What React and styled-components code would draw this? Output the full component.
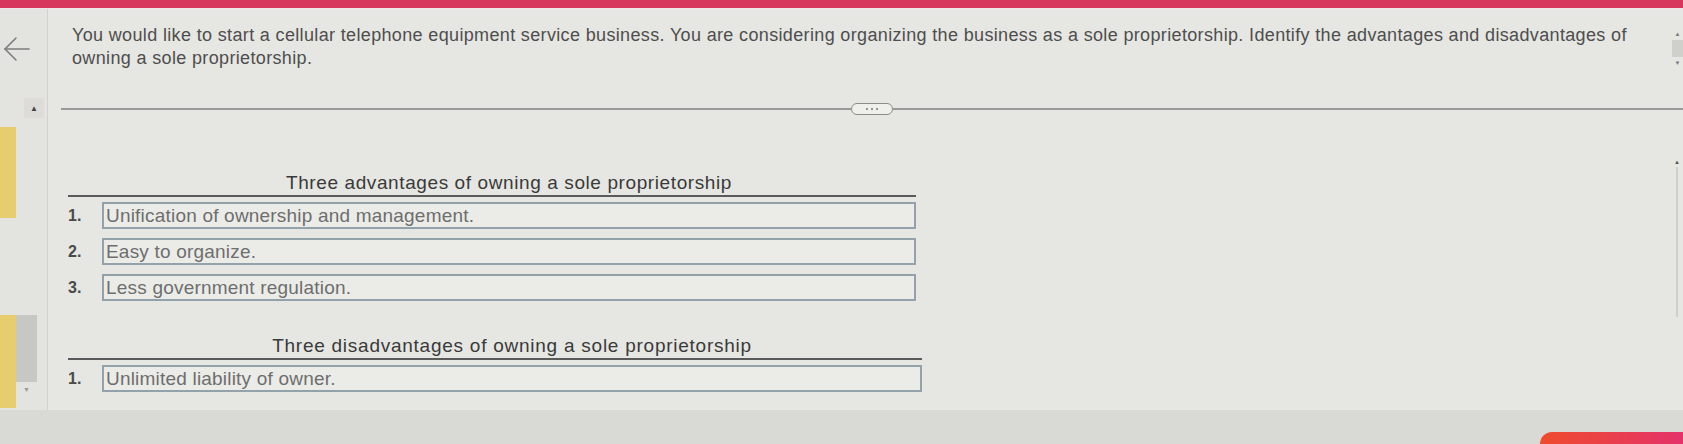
import React from "react";
import styled, { createGlobalStyle } from "styled-components";

const Global = createGlobalStyle`
  html, body { margin: 0; padding: 0; }
  body {
    background: #d9d9d5;
    font-family: "Liberation Sans", Arial, sans-serif;
    width: 1683px;
    height: 444px;
    overflow: hidden;
  }
`;

const Page = styled.div`
  width: 1683px;
  height: 444px;
  display: flex;
  flex-direction: column;
  background: #d9d9d5;
`;

const TopBar = styled.div`
  height: 8px;
  background: #d7375c;
  border-bottom: 1px solid #eee6e8;
`;

const Body = styled.div`
  height: 401px;
  display: flex;
  background: #e6e6e2;
`;

const Sidebar = styled.nav`
  width: 47px;
  border-right: 1px solid #d2d2ce;
  display: flex;
  flex-direction: column;
  background: #e3e3df;
`;

const BackButton = styled.button`
  all: unset;
  height: 58px;
  padding-left: 3px;
  display: flex;
  align-items: center;
  color: #7e7e7e;
  margin-top: 11px;
  align-self: flex-start;
`;

const NavUp = styled.div`
  margin: 20px 0 0 24px;
  width: 20px;
  height: 20px;
  background: #dddcd8;
  display: flex;
  align-items: center;
  justify-content: center;
  color: #444;
  font-size: 8px;
`;

const NavItem = styled.div`
  width: ${(p) => p.$w || 16}px;
  flex-shrink: 0;
  height: ${(p) => p.$h}px;
  margin-top: ${(p) => p.$mt || 0}px;
  background: ${(p) => p.$bg};
  display: flex;
`;

const NavScroll = styled.div`
  width: 21px;
  display: flex;
  flex-direction: column;
  align-items: center;
  gap: 4px;
`;

const NavThumb = styled.div`
  width: 21px;
  height: 67px;
  background: #c7c7c3;
`;

const NavDown = styled.div`
  font-size: 7px;
  color: #9a9a9a;
`;

const Main = styled.main`
  flex: 1;
  display: flex;
  flex-direction: column;
  min-width: 0;
`;

const QuestionRow = styled.div`
  display: flex;
  height: 92px;
`;

const Question = styled.p`
  margin: 0;
  padding: 15px 0 0 24px;
  width: 1580px;
  flex-shrink: 0;
  font-size: 18px;
  line-height: 23px;
  letter-spacing: 0.35px;
  color: #4e4e4e;
`;

const MiniScroll = styled.div`
  margin: 22px 0 0 auto;
  width: 11px;
  display: flex;
  flex-direction: column;
  align-items: center;
  gap: 3px;
  font-size: 6px;
  color: #777;
`;

const MiniThumb = styled.div`
  width: 11px;
  height: 17px;
  background: #cfcfcb;
`;

const DividerRow = styled.div`
  margin-left: 13px;
  height: 16px;
  display: flex;
  align-items: center;
`;

const Rule = styled.div`
  flex: 1;
  height: 2px;
  background: #9a9a98;
`;

const Pill = styled.button`
  all: unset;
  width: 40px;
  height: 10px;
  border: 1.5px solid #8c8c8a;
  border-radius: 7px;
  background: #efefec;
  display: flex;
  align-items: center;
  justify-content: center;
  gap: 3px;
`;

const Dot = styled.span`
  width: 2px;
  height: 2px;
  border-radius: 50%;
  background: #777;
`;

const Content = styled.div`
  flex: 1;
  display: flex;
`;

const Answers = styled.div`
  padding: 56px 0 0 20px;
  display: flex;
  flex-direction: column;
  gap: 35px;
`;

const Section = styled.section`
  display: grid;
  grid-template-columns: 34px ${(p) => p.$w}px;
  row-gap: 9px;
`;

const Heading = styled.div`
  grid-column: 1 / 3;
  display: grid;
  grid-template-columns: 34px 1fr;
  border-bottom: 2px solid #5a5a5a;
  height: 22px;
  margin-bottom: -4px;
`;

const HeadingText = styled.div`
  grid-column: 2;
  text-align: center;
  font-size: 19px;
  line-height: 20px;
  color: #3a3a3a;
  letter-spacing: ${(p) => p.$ls}px;
`;

const Num = styled.div`
  font-size: 16px;
  color: #4a4a4a;
  font-weight: bold;
  display: flex;
  align-items: center;
`;

const Box = styled.div`
  height: 23px;
  border: 2px solid #93a1aa;
  background: #ebebe8;
  display: flex;
  align-items: center;
  padding-left: 2px;
  font-size: 19px;
  letter-spacing: 0.2px;
  color: #6e6e6e;
`;

const RightRail = styled.div`
  margin-left: auto;
  width: 12px;
  padding-top: 42px;
  display: flex;
  flex-direction: column;
  align-items: center;
  gap: 2px;
`;

const RailUp = styled.div`
  font-size: 6px;
  color: #555;
`;

const RailLine = styled.div`
  width: 2px;
  height: 150px;
  background: #cfcfca;
`;

const Footer = styled.div`
  flex: 1;
  display: flex;
  justify-content: flex-end;
  align-items: flex-end;
`;

const SubmitButton = styled.button`
  all: unset;
  width: 143px;
  height: 12px;
  border-radius: 14px 0 0 0;
  background: linear-gradient(90deg, #ef4b2e, #e3336a);
`;

const advantages = [
  "Unification of ownership and management.",
  "Easy to organize.",
  "Less government regulation.",
];

const disadvantages = ["Unlimited liability of owner."];

function Arrow() {
  return (
    <svg width="27" height="26" viewBox="0 0 27 26" fill="none" stroke="currentColor" strokeWidth="1.6" strokeLinecap="round">
      <path d="M26 13H2" />
      <path d="M13 2L2 13l11 11" />
    </svg>
  );
}

function AnswerSection({ title, items, width, spacing }) {
  return (
    <Section $w={width}>
      <Heading>
        <HeadingText $ls={spacing}>{title}</HeadingText>
      </Heading>
      {items.map((t, i) => (
        <React.Fragment key={i}>
          <Num>{i + 1}.</Num>
          <Box>{t}</Box>
        </React.Fragment>
      ))}
    </Section>
  );
}

export default function App() {
  return (
    <Page>
      <Global />
      <TopBar />
      <Body>
        <Sidebar>
          <BackButton aria-label="Back">
            <Arrow />
          </BackButton>
          <NavUp>▲</NavUp>
          <NavItem $mt={9} $h={91} $bg="#e8cd6e" />
          <NavItem $mt={97} $h={93} $w={37} $bg="transparent">
            <NavItem $h={93} $bg="#e8cd6e" />
            <NavScroll>
              <NavThumb />
              <NavDown>▼</NavDown>
            </NavScroll>
          </NavItem>
        </Sidebar>
        <Main>
          <QuestionRow>
            <Question>
              You would like to start a cellular telephone equipment service business. You are considering
              organizing the business as a sole proprietorship. Identify the advantages and disadvantages of
              owning a sole proprietorship.
            </Question>
            <MiniScroll>
              <span>▲</span>
              <MiniThumb />
              <span>▼</span>
            </MiniScroll>
          </QuestionRow>
          <DividerRow>
            <Rule />
            <Pill aria-label="more">
              <Dot />
              <Dot />
              <Dot />
            </Pill>
            <Rule />
          </DividerRow>
          <Content>
            <Answers>
              <AnswerSection
                title="Three advantages of owning a sole proprietorship"
                items={advantages}
                width={814}
                spacing={0.6}
              />
              <AnswerSection
                title="Three disadvantages of owning a sole proprietorship"
                items={disadvantages}
                width={820}
                spacing={0.75}
              />
            </Answers>
            <RightRail>
              <RailUp>▲</RailUp>
              <RailLine />
            </RightRail>
          </Content>
        </Main>
      </Body>
      <Footer>
        <SubmitButton aria-label="Submit" />
      </Footer>
    </Page>
  );
}
